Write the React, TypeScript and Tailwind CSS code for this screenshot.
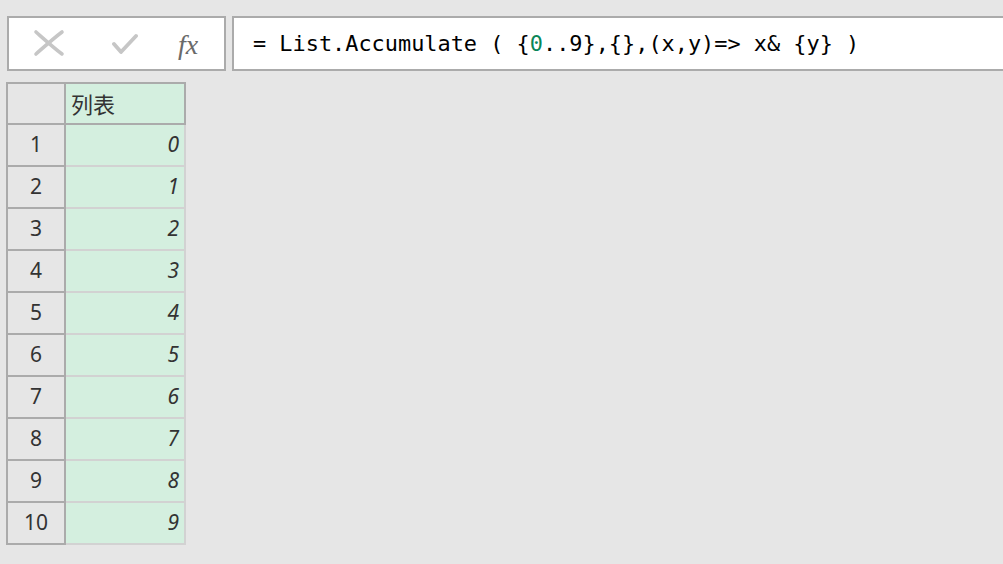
import React from "react";

const rows = [0, 1, 2, 3, 4, 5, 6, 7, 8, 9];

export default function App() {
  return (
    <div
      className="w-[1003px] h-[564px] bg-[#e6e6e6] overflow-hidden text-[#333333]"
      style={{ fontFamily: '"Noto Sans", "Open Sans", "Noto Sans CJK SC", sans-serif' }}
    >
      <div className="flex pt-[16px] pl-[7px] gap-[6px]">
        <div className="w-[219px] h-[55px] border-2 border-[#ababab] bg-white flex items-center">
          <svg width="32" height="28" viewBox="0 0 32 28" className="ml-[24px] -mt-[2px]">
            <path d="M3 3 C 11 10, 21 19, 29 25" stroke="#c6c6c6" strokeWidth="3.6" fill="none" strokeLinecap="round" />
            <path d="M29 3 C 21 9, 11 18, 3 25" stroke="#c6c6c6" strokeWidth="3.6" fill="none" strokeLinecap="round" />
          </svg>
          <svg width="26" height="22" viewBox="0 0 26 22" className="ml-[47px]">
            <path d="M2 11 L9 19 L24 3" stroke="#c6c6c6" strokeWidth="3.8" fill="none" strokeLinecap="round" strokeLinejoin="round" />
          </svg>
          <span
            className="ml-[40px] text-[28px] italic text-[#6a6a6a] leading-none mt-[2px]"
            style={{ fontFamily: '"Liberation Serif", serif' }}
          >
            fx
          </span>
        </div>
        <div className="flex-1 h-[55px] border-y-2 border-l-2 border-[#ababab] bg-white flex items-center pl-[19px]">
          <span
            className="text-[21.9px] text-black whitespace-pre leading-none"
            style={{ fontFamily: '"DejaVu Sans Mono", monospace' }}
          >
            = List.Accumulate ( {"{"}
            <span className="text-[#098658]">0</span>
            {"..9},{},(x,y)=> x& {y} )"}
          </span>
        </div>
      </div>

      <div className="ml-[6px] mt-[11px] w-[180px] grid grid-cols-[60px_120px]">
        <div className="h-[43px] border-2 border-[#ababab] bg-[#e6e6e6]" />
        <div className="h-[43px] border-t-2 border-b-2 border-r-2 border-[#ababab] bg-[#d4efdf] text-[22px] pl-[5px] pt-[6px] leading-none flex items-start">
          <span className="mt-[3px]">列表</span>
        </div>
        {rows.map((v, i) => (
          <React.Fragment key={i}>
            <div className="h-[42px] border-x-2 border-b-2 border-[#ababab] bg-[#e6e6e6] flex items-center justify-center text-[21px]">
              {i + 1}
            </div>
            <div className="h-[42px] border-r-2 border-b-2 border-[#d2d2d2] bg-[#d4efdf] flex items-center justify-end pr-[5px] text-[21px] italic">
              {v}
            </div>
          </React.Fragment>
        ))}
      </div>
    </div>
  );
}
